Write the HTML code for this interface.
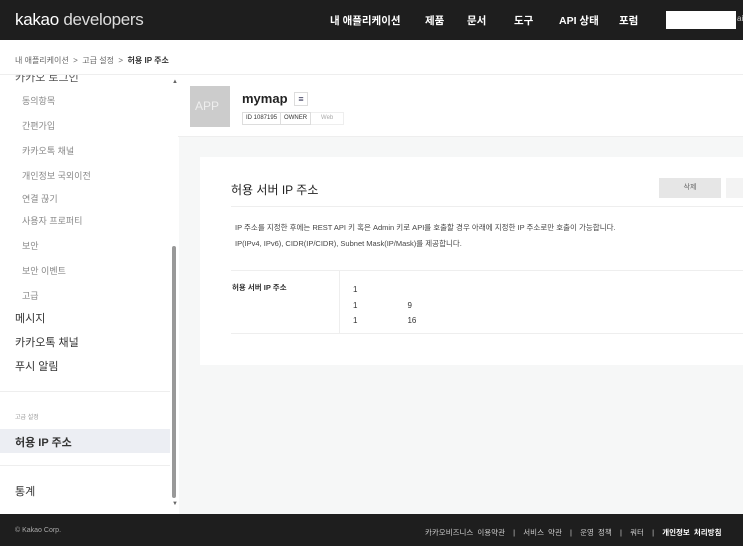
<!DOCTYPE html>
<html><head><meta charset="utf-8"><style>
*{margin:0;padding:0;box-sizing:border-box}
body{width:743px;height:546px;overflow:hidden;font-family:"Liberation Sans","Noto Sans CJK KR",sans-serif;background:#f6f7f7;position:relative}
.hd{position:absolute;left:0;top:0;width:743px;height:40px;background:#1e1e1e;color:#fff}
.logo{position:absolute;left:15px;top:10px;font-size:17px;letter-spacing:-.3px}
.nav{position:absolute;top:13px;font-size:10.5px;font-weight:bold}
.bc{position:absolute;left:0;top:40px;width:743px;height:35px;background:#fff;border-bottom:1px solid #eee;font-size:8px;color:#666;padding:15px 0 0 15px}
.sb{position:absolute;left:0;top:75px;width:170px;height:439px;background:#fff;overflow:hidden}
.sb div{position:absolute;font-size:9px;color:#888}
.sb .b{font-size:11px;color:#333;left:15px}
.scr{position:absolute;left:170px;top:75px;width:9px;height:439px;background:#fff}
.bar{position:absolute;left:172px;top:246px;width:4px;height:252px;background:#999;border-radius:2px}
.card{position:absolute;left:200px;top:157px;width:543px;height:208px;background:#fff}
.ft{position:absolute;left:0;top:514px;width:743px;height:32px;background:#1e1e1e;color:#aaa;font-size:7px}
</style></head><body>
<div class="hd"><div class="logo"><b style="font-weight:normal">kakao</b> <span style="color:#ddd">developers</span></div>
<div class="nav" style="left:330px">내 애플리케이션</div><div class="nav" style="left:425px">제품</div><div class="nav" style="left:467px">문서</div><div class="nav" style="left:514px">도구</div><div class="nav" style="left:559px">API 상태</div><div class="nav" style="left:619px">포럼</div>
<div style="position:absolute;left:666px;top:11px;width:70px;height:18px;background:#fff"></div><div style="position:absolute;left:737px;top:14px;font-size:8px;color:#ccc">ail.c</div></div>
<div class="bc">내 애플리케이션 &nbsp;&gt;&nbsp; 고급 설정 &nbsp;&gt;&nbsp; <b style="color:#333">허용 IP 주소</b></div>
<div class="sb">
<div class="b" style="top:-6px;color:#555">카카오 로그인</div>
<div style="left:22px;top:19px">동의항목</div><div style="left:22px;top:44px">간편가입</div><div style="left:22px;top:69px">카카오톡 채널</div><div style="left:22px;top:94px">개인정보 국외이전</div><div style="left:22px;top:117px">연결 끊기</div><div style="left:22px;top:139px">사용자 프로퍼티</div><div style="left:22px;top:164px">보안</div><div style="left:22px;top:189px">보안 이벤트</div><div style="left:22px;top:214px">고급</div>
<div class="b" style="top:235px">메시지</div><div class="b" style="top:259px">카카오톡 채널</div><div class="b" style="top:283px">푸시 알림</div>
<div style="left:0;top:316px;width:170px;border-top:1px solid #eee"></div>
<div style="left:15px;top:337px;font-size:6px;color:#999">고급 설정</div>
<div style="left:0;top:354px;width:170px;height:24px;background:#eceef3"></div>
<div class="b" style="top:359px;font-weight:bold">허용 IP 주소</div>
<div style="left:0;top:390px;width:170px;border-top:1px solid #eee"></div>
<div class="b" style="top:408px">통계</div>
</div>
<div class="scr"><div style="position:absolute;left:2px;top:4px;font-size:6px;color:#666">▲</div><div style="position:absolute;left:2px;top:426px;font-size:6px;color:#666">▼</div></div><div class="bar"></div>
<div style="position:absolute;left:178px;top:75px;width:565px;height:62px;background:#fff;border-bottom:1px solid #eee"></div>
<div style="position:absolute;left:190px;top:86px;width:40px;height:41px;background:#ccc;color:#eee;font-size:12px;padding:13px 0 0 5px">APP</div>
<div style="position:absolute;left:242px;top:91px;font-size:13px;font-weight:bold;color:#222">mymap</div>
<div style="position:absolute;left:294px;top:92px;width:14px;height:14px;border:1px solid #ddd;font-size:9px;color:#335;text-align:center;line-height:12px">≡</div>
<div style="position:absolute;left:242px;top:112px;height:13px;font-size:6px;color:#333;display:flex">
<span style="border:1px solid #ddd;padding:2px 3px">ID 1087195</span><span style="border:1px solid #ddd;border-left:0;padding:2px 3px">OWNER</span><span style="border:1px solid #eee;border-left:0;padding:2px 10px;color:#aaa">Web</span></div>
<div class="card">
<div style="position:absolute;left:31px;top:24px;font-size:12px;color:#222">허용 서버 IP 주소</div>
<div style="position:absolute;left:459px;top:21px;width:62px;height:20px;background:#e6e6e6;font-size:7px;color:#666;text-align:center;line-height:20px">삭제</div>
<div style="position:absolute;left:526px;top:21px;width:17px;height:20px;background:#f3f3f3"></div>
<div style="position:absolute;left:31px;top:49px;width:512px;border-top:1px solid #eee"></div>
<div style="position:absolute;left:35px;top:63px;font-size:7.5px;color:#444;line-height:16px">IP 주소를 지정한 후에는 REST API 키 혹은 Admin 키로 API를 호출할 경우 아래에 지정한 IP 주소로만 호출이 가능합니다.<br>IP(IPv4, IPv6), CIDR(IP/CIDR), Subnet Mask(IP/Mask)를 제공합니다.</div>
<div style="position:absolute;left:31px;top:113px;width:512px;height:64px;border-top:1px solid #eee;border-bottom:1px solid #eee"></div>
<div style="position:absolute;left:139px;top:113px;height:64px;border-left:1px solid #eee"></div>
<div style="position:absolute;left:32px;top:125px;font-size:7.5px;font-weight:bold;color:#333">허용 서버 IP 주소</div>
<div style="position:absolute;left:153px;top:125px;font-size:8px;color:#333;line-height:15.5px">1<br>1<span style="margin-left:50px">9</span><br>1<span style="margin-left:50px">16</span></div>
</div>
<div class="ft"><div style="position:absolute;left:15px;top:13px">© Kakao Corp.</div>
<div style="position:absolute;left:425px;top:13px;color:#ccc;font-size:7.5px;word-spacing:2px">카카오비즈니스 이용약관 &nbsp;|&nbsp; 서비스 약관 &nbsp;|&nbsp; 운영 정책 &nbsp;|&nbsp; 쿼터 &nbsp;|&nbsp; <b style="color:#fff">개인정보 처리방침</b></div></div>
</body></html>
